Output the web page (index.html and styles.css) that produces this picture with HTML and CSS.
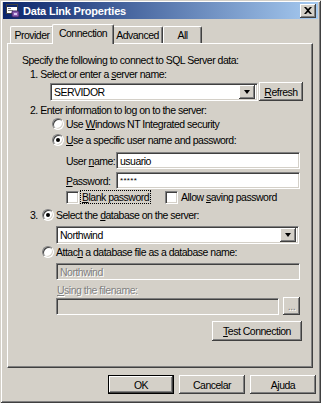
FILE: index.html
```html
<!DOCTYPE html>
<html>
<head>
<meta charset="utf-8">
<link rel="stylesheet" href="styles.css">
</head>
<body>
<div class="window">
  <div class="titlebar">
    <svg class="app-icon" width="14" height="14" viewBox="0 0 14 14">
      <rect x="0.5" y="0.5" width="11" height="9" fill="#fff" stroke="#404040"/>
      <rect x="1" y="1" width="10" height="2" fill="#0a246a"/>
      <rect x="2" y="4" width="3" height="1" fill="#808080"/>
      <rect x="2" y="6" width="5" height="1" fill="#808080"/>
      <rect x="6" y="7" width="7" height="6" rx="1" fill="#8a5cb0" stroke="#3a2060"/>
      <rect x="8" y="9" width="3" height="2" fill="#d8c8f0"/>
    </svg>
    <span class="title">Data Link Properties</span>
    <span class="close">
      <svg width="8" height="7" viewBox="0 0 8 7"><path d="M0 0h2l2 2l2-2h2l-3 3.5l3 3.5h-2l-2-2l-2 2h-2l3-3.5z" fill="#000"/></svg>
    </span>
  </div>

  <div class="tabs">
    <div class="tab tab-provider">Provider</div>
    <div class="tab tab-active">Connection</div>
    <div class="tab tab-advanced">Advanced</div>
    <div class="tab tab-all">All</div>
  </div>

  <div class="panel">
    <div class="line in-14">Specify the following to connect to SQL Server data:</div>
    <div class="line in-22">1. Select or enter a <u>s</u>erver name:</div>
    <div class="row server-row in-42 mt-1">
      <div class="combo combo-server"><span class="combo-text">SERVIDOR</span><span class="drop"><i class="arrow"></i></span></div>
      <button class="btn btn-refresh"><u>R</u>efresh</button>
    </div>
    <div class="line in-22 mt-2">2. Enter information to log on to the server:</div>
    <div class="row line in-44">
      <span class="radio"></span><span class="opt-label">Use <u>W</u>indows NT Integrated security</span>
    </div>
    <div class="row line in-44 mt-2">
      <span class="radio radio-on"></span><span class="opt-label"><u>U</u>se a specific user name and password:</span>
    </div>
    <div class="row field-row in-58 mt-5">
      <span class="field-label">User <u>n</u>ame:</span>
      <span class="input input-cred">usuario</span>
    </div>
    <div class="row field-row in-58 mt-3">
      <span class="field-label"><u>P</u>assword:</span>
      <span class="input input-cred pw">*****</span>
    </div>
    <div class="row line in-58 mt-1">
      <span class="check-group">
        <span class="check"></span><span class="check-label focus"><u>B</u>lank password</span>
      </span>
      <span class="check"></span><span class="check-label">Allow <u>s</u>aving password</span>
    </div>
    <div class="row line in-22 mt-4">
      <span class="num">3.</span><span class="radio radio-on"></span><span class="opt-label">Select the <u>d</u>atabase on the server:</span>
    </div>
    <div class="row in-48 mt-4">
      <div class="combo combo-db"><span class="combo-text">Northwind</span><span class="drop"><i class="arrow"></i></span></div>
    </div>
    <div class="row line in-34 mt-1">
      <span class="radio"></span><span class="opt-label">Attac<u>h</u> a database file as a database name:</span>
    </div>
    <div class="row in-48 mt-4">
      <span class="input input-disabled input-dbname">Northwind</span>
    </div>
    <div class="line in-49 disabled-text mt-3"><u>U</u>sing the filename:</div>
    <div class="row file-row in-48">
      <span class="input input-disabled input-file"></span>
      <button class="btn btn-browse">...</button>
    </div>
    <div class="row test-row mt-6">
      <button class="btn btn-test"><u>T</u>est Connection</button>
    </div>
  </div>

  <div class="buttons">
    <button class="btn btn-dlg btn-default">OK</button>
    <button class="btn btn-dlg">Cancelar</button>
    <button class="btn btn-dlg">Ajuda</button>
  </div>
</div>
</body>
</html>
```

FILE: styles.css
```css
html, body {
  margin: 0;
  padding: 0;
  background: #d4d0c8;
}
body {
  font-family: "Liberation Sans", Arial, sans-serif;
  font-size: 10.5px;
  letter-spacing: -0.5px;
  color: #000;
}
u {
  text-decoration: underline;
  text-underline-offset: 1px;
}

.window {
  width: 321px;
  height: 403px;
  box-sizing: border-box;
  background: #d4d0c8;
  padding: 2px 3px 3px 3px;
  box-shadow: inset 1px 1px #d4d0c8, inset -1px -1px #404040, inset 2px 2px #fff, inset -2px -2px #808080;
  overflow: hidden;
}

/* title bar */
.titlebar {
  height: 17px;
  display: flex;
  align-items: center;
  background: linear-gradient(to right, #0a246a, #a6caf0);
  padding: 0 2px 0 2px;
}
.app-icon {
  flex: none;
  margin-left: 1px;
}
.title {
  color: #fff;
  font-weight: bold;
  font-size: 11px;
  letter-spacing: -0.2px;
  margin-left: 3px;
  flex: 1;
}
.close {
  width: 16px;
  height: 14px;
  box-sizing: border-box;
  background: #d4d0c8;
  box-shadow: inset -1px -1px #404040, inset 1px 1px #fff, inset -2px -2px #808080;
  display: flex;
  align-items: center;
  justify-content: center;
  padding-bottom: 1px;
}

/* tabs */
.tabs {
  display: flex;
  align-items: flex-end;
  height: 24px;
  padding-left: 7px;
  position: relative;
  z-index: 2;
}
.tab {
  height: 17px;
  box-sizing: border-box;
  border-top: 1px solid #fff;
  border-left: 1px solid #fff;
  border-right: 1px solid #404040;
  box-shadow: inset -1px 0 #808080;
  border-radius: 2px 2px 0 0;
  display: flex;
  align-items: center;
  justify-content: center;
  padding-bottom: 1px;
}
.tab-provider { width: 44px; }
.tab-active {
  width: 62px;
  height: 20px;
  margin: 0 -2px -1px -2px;
  background: #d4d0c8;
  padding-bottom: 3px;
  position: relative;
  z-index: 3;
}
.tab-advanced { width: 51px; }
.tab-all { width: 39px; }

/* panel */
.panel {
  margin-left: 4px;
  width: 306px;
  height: 325px;
  box-sizing: border-box;
  border-top: 1px solid #fff;
  border-left: 1px solid #fff;
  border-right: 1px solid #404040;
  border-bottom: 1px solid #404040;
  box-shadow: inset -1px -1px #808080;
  padding-top: 9px;
  position: relative;
}

.row { display: flex; align-items: center; }
.line { height: 14px; line-height: 14px; white-space: nowrap; }
.in-14 { padding-left: 14px; }
.in-22 { padding-left: 22px; }
.in-34 { padding-left: 34px; }
.in-42 { padding-left: 42px; }
.in-44 { padding-left: 44px; }
.in-48 { padding-left: 48px; }
.in-49 { padding-left: 49px; }
.in-58 { padding-left: 58px; }
.mt-1 { margin-top: 1px; }
.mt-2 { margin-top: 2px; }
.mt-3 { margin-top: 3px; }
.mt-4 { margin-top: 4px; }
.mt-5 { margin-top: 5px; }
.mt-6 { margin-top: 6px; }

/* sunken fields */
.combo, .input {
  box-sizing: border-box;
  background: #fff;
  border-top: 1px solid #808080;
  border-left: 1px solid #808080;
  border-right: 1px solid #fff;
  border-bottom: 1px solid #fff;
  box-shadow: inset 1px 1px #404040, inset -1px -1px #d4d0c8;
  display: flex;
  align-items: center;
  white-space: nowrap;
}
.combo { height: 18px; padding: 2px 2px 2px 3px; }
.combo-text { flex: 1; }
.drop {
  width: 16px;
  height: 14px;
  box-sizing: border-box;
  background: #d4d0c8;
  box-shadow: inset -1px -1px #404040, inset 1px 1px #fff, inset -2px -2px #808080;
  display: flex;
  align-items: center;
  justify-content: center;
}
.arrow {
  width: 0;
  height: 0;
  border-left: 3.5px solid transparent;
  border-right: 3.5px solid transparent;
  border-top: 4px solid #000;
  margin-left: -1px;
}
.combo-server { width: 208px; }
.combo-db { width: 243px; }

.server-row { height: 19px; }
.btn {
  font: inherit;
  letter-spacing: inherit;
  color: #000;
  background: #d4d0c8;
  border: none;
  padding: 0;
  box-sizing: border-box;
  box-shadow: inset -1px -1px #404040, inset 1px 1px #fff, inset -2px -2px #808080;
  height: 19px;
}
.btn-refresh { width: 44px; margin-left: 1px; }

.opt-label { margin-left: 2px; white-space: nowrap; }
.radio {
  width: 12px;
  height: 12px;
  border-radius: 50%;
  box-sizing: border-box;
  background: #fff;
  border: 1px solid;
  border-color: #808080 #fff #fff #808080;
  box-shadow: inset 1px 1px #404040, inset -1px -1px #d4d0c8;
  display: flex;
  align-items: center;
  justify-content: center;
  flex: none;
}
.radio-on::after {
  content: "";
  width: 4px;
  height: 4px;
  border-radius: 50%;
  background: #000;
}
.num { width: 12px; }

.field-row { height: 17px; }
.field-label { width: 50px; white-space: nowrap; }
.input { height: 17px; padding-left: 3px; }
.input-cred { width: 184px; }
.pw { font-size: 8px; letter-spacing: 0.3px; }

.check-group { display: flex; align-items: center; width: 99px; }
.check {
  width: 13px;
  height: 13px;
  box-sizing: border-box;
  background: #fff;
  border: 1px solid;
  border-color: #808080 #fff #fff #808080;
  box-shadow: inset 1px 1px #404040, inset -1px -1px #d4d0c8;
  flex: none;
}
.check-label { margin-left: 3px; white-space: nowrap; }
.focus { outline: 1px dotted #000; outline-offset: 0; padding: 0 1px; margin-left: 2px; line-height: 12px; }

.input-disabled {
  background: #d4d0c8;
  color: #808080;
  text-shadow: 1px 1px #fff;
}
.input-dbname { width: 244px; }
.disabled-text { color: #808080; text-shadow: 1px 1px #fff; }
.file-row { height: 18px; }
.input-file { width: 223px; }
.btn-browse { width: 17px; height: 18px; margin-left: 4px; color: #808080; text-shadow: 1px 1px #fff; line-height: 8px; }

.test-row { padding-left: 204px; }
.btn-test { width: 90px; height: 20px; }

.buttons {
  display: flex;
  justify-content: flex-end;
  gap: 5px;
  margin-top: 7px;
  padding-right: 2px;
}
.btn-dlg { width: 66px; height: 19px; }
.btn-default {
  border: 1px solid #000;
  box-shadow: inset -1px -1px #404040, inset 1px 1px #fff, inset -2px -2px #808080;
}
```
